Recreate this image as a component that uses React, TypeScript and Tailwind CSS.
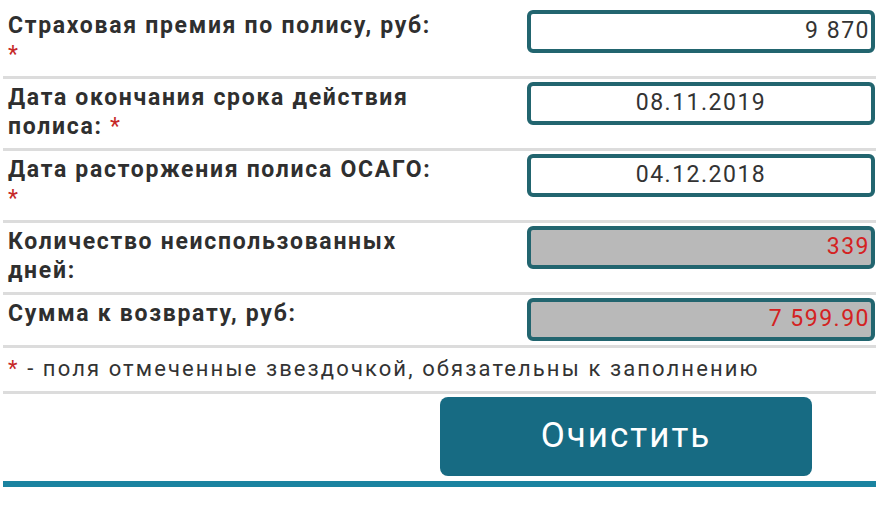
const rows = [
  { label: 'Страховая премия по полису, руб:', star: true, value: '9 870', align: 'right', readonly: false },
  { label: 'Дата окончания срока действия полиса:', star: true, value: '08.11.2019', align: 'center', readonly: false },
  { label: 'Дата расторжения полиса ОСАГО:', star: true, value: '04.12.2018', align: 'center', readonly: false },
  { label: 'Количество неиспользованных дней:', star: false, value: '339', align: 'right', readonly: true },
  { label: 'Сумма к возврату, руб:', star: false, value: '7 599.90', align: 'right', readonly: true },
];

function Field({ value, align, readonly }: { value: string; align: string; readonly: boolean }) {
  return (
    <div
      className={
        'w-[348px] h-[43px] border-4 border-[#22656f] rounded-[6px] flex items-center px-[1px] text-[23px] tracking-[1.5px] ' +
        (readonly ? 'bg-[#b9b9b9] text-[#d42222] ' : 'bg-white text-[#333333] ') +
        (align === 'center' ? 'justify-center' : 'justify-end')
      }
    >
      {value}
    </div>
  );
}

export default function App() {
  return (
    <div className="w-[885px] h-[510px] bg-white font-['Roboto',sans-serif] pt-[7px] px-[3px]">
      <div className="w-[873px]">
        {rows.map((r) => (
          <div key={r.label} className="flex justify-between border-b-[3px] border-[#dcdcdc]">
            <div className="w-[440px] pl-[5px] pt-[4px] pb-[7px] text-[23px] leading-[29px] font-bold tracking-[1.7px] text-[#2f2f2f]">
              {r.label}
              {r.star && <span className="text-[#c62828] font-normal"> *</span>}
            </div>
            <div className="pt-[3px] pb-[4px] pr-[1px]">
              <Field value={r.value} align={r.align} readonly={r.readonly} />
            </div>
          </div>
        ))}
        <div className="border-b-[3px] border-[#dcdcdc] pl-[5px] pt-[6px] pb-[8px] text-[22px] leading-[29px] tracking-[2.1px] text-[#333333]">
          <span className="text-[#c62828]">*</span> - поля отмеченные звездочкой, обязательны к заполнению
        </div>
        <button className="mt-[3px] ml-[437px] w-[372px] h-[79px] rounded-[8px] bg-[#176b83] text-white text-[35px] tracking-[2px]">
          Очистить
        </button>
        <div className="mt-[5px] h-[6px] bg-[#1a83a0]" />
      </div>
    </div>
  );
}
